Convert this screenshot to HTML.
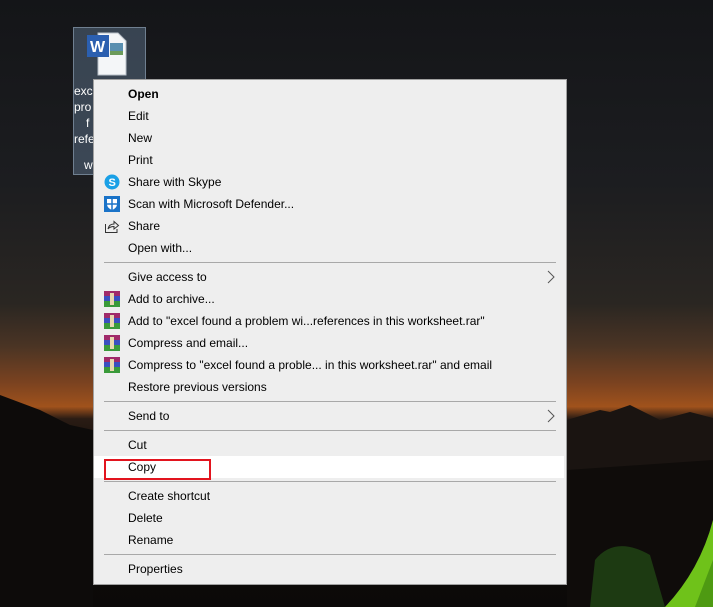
<!DOCTYPE html>
<html><head><meta charset="utf-8"><style>
*{margin:0;padding:0;box-sizing:border-box}
body{width:713px;height:607px;overflow:hidden;position:relative;font-family:"Liberation Sans",sans-serif;
background:linear-gradient(180deg,#141518 0%,#1c1d20 30%,#2a2622 50%,#4a3424 57%,#7a4220 63%,#a0521c 67%,#2a1c14 69%,#120d0b 75%,#0b0908 100%);}
.mtn{position:absolute;left:0;top:0}
.sel{position:absolute;left:73px;top:27px;width:73px;height:148px;background:rgba(100,125,150,.45);border:1px solid #6f7f90}
.lbl{position:absolute;left:74px;color:#fff;font-size:12px;line-height:16px}
.menu{position:absolute;left:93px;top:79px;width:474px;height:506px;background:#eeeeee;border:1px solid #a0a0a0}
.it{position:absolute;left:34px;font-size:12px;color:#000;line-height:16px}
.sep{position:absolute;left:10px;width:452px;height:1px;background:#a8a8a8}
.ic{position:absolute;left:10px;width:16px;height:16px}
.arr{position:absolute;left:453px;width:8px;height:14px}
</style></head><body>
<svg class="mtn" width="713" height="607">
<path d="M0 395 L40 410 L70 425 L93 430 L93 607 L0 607Z" fill="#0d0b0a"/>
<path d="M567 420 L600 410 L610 412 L630 405 L660 420 L690 412 L713 418 L713 607 L567 607Z" fill="#1a1411"/>
<path d="M567 470 L713 460 L713 607 L567 607Z" fill="#0f0c0a"/>
<path d="M595 560 Q615 535 650 555 L665 607 L590 607Z" fill="#1d3a12"/>
<path d="M713 520 L713 607 L665 607 Q700 570 713 520Z" fill="#6fc21a"/>
<path d="M713 560 L713 607 L695 607Z" fill="#4e9a12"/>
</svg>
<div class="sel"></div>
<svg style="position:absolute;left:84px;top:31px" width="46" height="46">
<path d="M14 2 H34 L42 10 V44 H14Z" fill="#f4f6f8" stroke="#b8c0c8"/>
<rect x="26" y="12" width="13" height="12" fill="#5a8fb0"/><rect x="26" y="20" width="13" height="4" fill="#6b9a5a"/>
<rect x="3" y="4" width="22" height="22" fill="#2b5fb0"/>
<text x="6" y="21" font-family="Liberation Sans" font-weight="bold" font-size="16" fill="#fff">W</text>
</svg>
<div class="lbl" style="top:83px">exc</div>
<div class="lbl" style="top:99px">pro</div>
<div class="lbl" style="top:115px;left:86px">f</div>
<div class="lbl" style="top:131px">refe</div>
<div class="lbl" style="top:157px;left:84px">w</div>
<div class="menu">
<div class="it" style="top:6px;font-weight:bold">Open</div>
<div class="it" style="top:28px">Edit</div>
<div class="it" style="top:50px">New</div>
<div class="it" style="top:72px">Print</div>
<svg class="ic" style="top:94px" viewBox="0 0 16 16"><circle cx="8" cy="8" r="7.5" fill="#1aa0e6"/><text x="4.5" y="12" font-size="11" font-weight="bold" fill="#fff" font-family="Liberation Sans">S</text></svg>
<div class="it" style="top:94px">Share with Skype</div>
<svg class="ic" style="top:116px" viewBox="0 0 16 16"><rect width="16" height="16" fill="#1a73c8"/><path d="M3 3H13V8Q13 12 8 14Q3 12 3 8Z" fill="#fff"/><path d="M8 3V14M3 8H13" stroke="#1a73c8" stroke-width="1.5"/></svg>
<div class="it" style="top:116px">Scan with Microsoft Defender...</div>
<svg class="ic" style="top:138px" viewBox="0 0 16 16" fill="none" stroke="#333"><path d="M1.5 6V14.5H13V11"/><path d="M4 11Q5 6 10 6V3.5L14.5 7.5L10 11V8.5Q6 8.5 4 11Z"/></svg>
<div class="it" style="top:138px">Share</div>
<div class="it" style="top:160px">Open with...</div>
<div class="sep" style="top:182px"></div>
<div class="it" style="top:189px">Give access to</div><svg class="arr" style="top:190px" viewBox="0 0 8 14"><path d="M1 1L7 7L1 13" fill="none" stroke="#555"/></svg>
<svg class="ic" style="top:211px" viewBox="0 0 16 16"><rect x="0" y="0" width="16" height="5" fill="#a02a6a"/><rect x="0" y="5" width="16" height="5" fill="#3a4fc0"/><rect x="0" y="10" width="16" height="6" fill="#3a9a3a"/><rect x="6" y="2" width="4" height="12" fill="#e8d8b0"/></svg>
<div class="it" style="top:211px">Add to archive...</div>
<svg class="ic" style="top:233px" viewBox="0 0 16 16"><rect x="0" y="0" width="16" height="5" fill="#a02a6a"/><rect x="0" y="5" width="16" height="5" fill="#3a4fc0"/><rect x="0" y="10" width="16" height="6" fill="#3a9a3a"/><rect x="6" y="2" width="4" height="12" fill="#e8d8b0"/></svg>
<div class="it" style="top:233px">Add to "excel found a problem wi...references in this worksheet.rar"</div>
<svg class="ic" style="top:255px" viewBox="0 0 16 16"><rect x="0" y="0" width="16" height="5" fill="#a02a6a"/><rect x="0" y="5" width="16" height="5" fill="#3a4fc0"/><rect x="0" y="10" width="16" height="6" fill="#3a9a3a"/><rect x="6" y="2" width="4" height="12" fill="#e8d8b0"/></svg>
<div class="it" style="top:255px">Compress and email...</div>
<svg class="ic" style="top:277px" viewBox="0 0 16 16"><rect x="0" y="0" width="16" height="5" fill="#a02a6a"/><rect x="0" y="5" width="16" height="5" fill="#3a4fc0"/><rect x="0" y="10" width="16" height="6" fill="#3a9a3a"/><rect x="6" y="2" width="4" height="12" fill="#e8d8b0"/></svg>
<div class="it" style="top:277px">Compress to "excel found a proble... in this worksheet.rar" and email</div>
<div class="it" style="top:299px">Restore previous versions</div>
<div class="sep" style="top:321px"></div>
<div class="it" style="top:328px">Send to</div><svg class="arr" style="top:329px" viewBox="0 0 8 14"><path d="M1 1L7 7L1 13" fill="none" stroke="#555"/></svg>
<div class="sep" style="top:350px"></div>
<div class="it" style="top:357px">Cut</div>
<div style="position:absolute;left:0;top:376px;width:470px;height:22px;background:#fff"></div>
<div style="position:absolute;left:10px;top:379px;width:107px;height:21px;border:2px solid #e2141e"></div>
<div class="it" style="top:379px">Copy</div>
<div class="sep" style="top:401px"></div>
<div class="it" style="top:408px">Create shortcut</div>
<div class="it" style="top:430px">Delete</div>
<div class="it" style="top:452px">Rename</div>
<div class="sep" style="top:474px"></div>
<div class="it" style="top:481px">Properties</div>
</div>
</body></html>
